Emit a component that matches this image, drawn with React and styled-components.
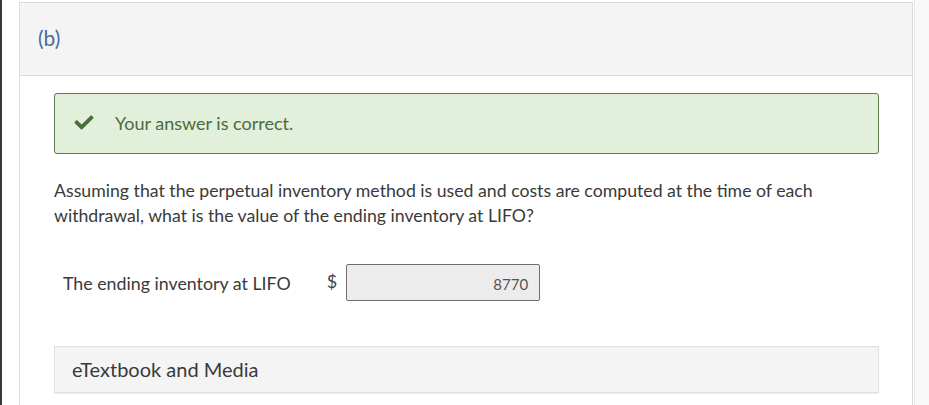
import styled, { createGlobalStyle } from "styled-components";
import { FaCheck } from "react-icons/fa";

const GlobalStyle = createGlobalStyle`
  html, body {
    margin: 0;
    padding: 0;
    background: #fff;
    font-family: Lato, "Open Sans", Arial, sans-serif;
    color: #333;
  }
`;

const Page = styled.div`
  display: flex;
  min-height: 405px;
  border-left: 2px solid #3a3a3a;
  overflow: hidden;
`;

const Main = styled.div`
  padding: 2px 0 0 17px;
`;

const Gutter = styled.div`
  flex: 1;
  margin-left: 1px;
  background: #f9f9f9;
  border-left: 1px solid #e8e8e8;
`;

const Card = styled.div`
  width: 892px;
  min-height: 420px;
  border: 1px solid #dcdcdc;
  border-bottom: none;
  background: #fff;
`;

const Header = styled.div`
  height: 73px;
  display: flex;
  align-items: center;
  padding: 0 0 4px 18px;
  box-sizing: border-box;
  background: #f4f4f4;
  border-bottom: 1px solid #dcdcdc;
  color: #4a6d9c;
  font-size: 21px;
`;

const Body = styled.div`
  padding: 17px 33px 0 34px;
`;

const Feedback = styled.div`
  height: 61px;
  box-sizing: border-box;
  display: flex;
  align-items: center;
  gap: 20px;
  padding: 0 0 2px 18px;
  background: #e2efda;
  border: 1px solid #5c7a50;
  border-radius: 3px;
  color: #4b6b3e;
  font-size: 18px;

  svg {
    width: 22px;
    height: 19px;
    color: #4a6e3d;
  }
`;

const Question = styled.p`
  margin: 24px 0 0;
  font-size: 17.7px;
  line-height: 25px;
  color: #3a3a3a;
`;

const AnswerRow = styled.div`
  display: flex;
  align-items: center;
  margin-top: 36px;
  padding-left: 9px;
`;

const Label = styled.span`
  font-size: 17.8px;
  color: #3a3a3a;
  margin-right: 36px;
`;

const Currency = styled.span`
  font-size: 18px;
  color: #444;
  margin-right: 9px;
  padding-bottom: 3px;
`;

const ValueBox = styled.div`
  width: 194px;
  height: 37px;
  box-sizing: border-box;
  display: flex;
  align-items: center;
  justify-content: flex-end;
  padding: 2px 11px 0 0;
  background: #ececec;
  border: 1px solid #6f6f6f;
  border-radius: 2px;
  font-size: 15px;
  color: #555;
`;

const Resources = styled.div`
  margin-top: 45px;
  height: 47px;
  box-sizing: border-box;
  display: flex;
  align-items: center;
  padding: 0 0 1px 17px;
  background: #f4f4f4;
  border: 1px solid #e0e0e0;
  box-shadow: 0 1px 1px rgba(0, 0, 0, 0.06);
  font-size: 20px;
  color: #3a3a3a;
`;

export default function App() {
  return (
    <>
      <GlobalStyle />
      <Page>
        <Main>
          <Card>
            <Header>(b)</Header>
            <Body>
              <Feedback>
                <FaCheck />
                <span>Your answer is correct.</span>
              </Feedback>
              <Question>
                Assuming that the perpetual inventory method is used and costs are computed at the time of each
                withdrawal, what is the value of the ending inventory at LIFO?
              </Question>
              <AnswerRow>
                <Label>The ending inventory at LIFO</Label>
                <Currency>$</Currency>
                <ValueBox>8770</ValueBox>
              </AnswerRow>
              <Resources>eTextbook and Media</Resources>
            </Body>
          </Card>
        </Main>
        <Gutter />
      </Page>
    </>
  );
}
